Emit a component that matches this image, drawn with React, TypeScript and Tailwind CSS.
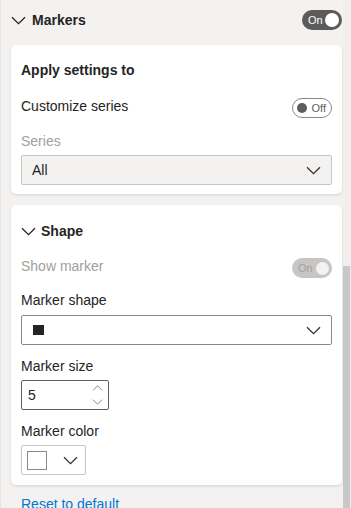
import { ReactNode } from "react";

// chevron used by section headers and dropdowns
function Chevron({ className = "" }: { className?: string }) {
  return (
    <svg width="15" height="9" viewBox="0 0 15 9" className={className} fill="none">
      <path d="M1 1.2 L7.5 7.6 L14 1.2" stroke="currentColor" strokeWidth="1.3" />
    </svg>
  );
}

function SmallChevron({ up }: { up?: boolean }) {
  return (
    <svg width="11" height="6" viewBox="0 0 11 6" fill="none">
      <path d={up ? "M1 5.3 L5.5 0.8 L10 5.3" : "M1 0.7 L5.5 5.2 L10 0.7"} stroke="#8a8886" strokeWidth="1" />
    </svg>
  );
}

function Toggle({ on, disabled }: { on: boolean; disabled?: boolean }) {
  if (disabled) {
    return (
      <div className="w-[40px] h-[20px] rounded-full bg-[#c8c6c4] flex items-center justify-between pl-[6px] pr-[3px]">
        <span className="text-[11px] text-[#a19f9d] leading-none">On</span>
        <span className="w-[13px] h-[13px] rounded-full bg-[#f3f2f1]" />
      </div>
    );
  }
  if (on) {
    return (
      <div className="w-[40px] h-[20px] rounded-full bg-[#5c5b5a] flex items-center justify-between pl-[6px] pr-[3px]">
        <span className="text-[11px] text-white leading-none">On</span>
        <span className="w-[14px] h-[14px] rounded-full bg-white" />
      </div>
    );
  }
  return (
    <div className="w-[40px] h-[20px] rounded-full border border-[#8a8886] bg-white flex items-center pl-[4px] pr-[5px] justify-between">
      <span className="w-[10px] h-[10px] rounded-full bg-[#605e5c]" />
      <span className="text-[11px] text-[#605e5c] leading-none">Off</span>
    </div>
  );
}

function Card({ children, className = "" }: { children: ReactNode; className?: string }) {
  return (
    <div className={"bg-white rounded-[5px] shadow-[0_1px_3px_rgba(0,0,0,0.13)] px-[10px] " + className}>
      {children}
    </div>
  );
}

export default function App() {
  return (
    <div
      className="w-[351px] h-[508px] overflow-hidden flex bg-[#f3f2f1] text-[#252423] text-[14px]"
      style={{ fontFamily: '"Liberation Sans", Arial, sans-serif' }}
    >
      <div className="w-[343px] border-l border-[#e6e4e2] pl-[10px] pr-[1px] pt-[10px] flex flex-col">
        {/* Markers header */}
        <div className="h-5 flex items-center justify-between">
          <div className="flex items-center gap-[6px]">
            <Chevron className="text-[#252423]" />
            <span className="text-[14px] font-semibold">Markers</span>
          </div>
          <Toggle on />
        </div>

        <Card className="mt-[15px] pt-[15px] pb-[9px]">
          <div className="h-5 flex items-center font-semibold">Apply settings to</div>
          <div className="h-5 mt-4 flex items-center justify-between">
            <span>Customize series</span>
            <div className="mt-[4px]">
              <Toggle on={false} />
            </div>
          </div>
          <div className="h-5 mt-[15px] flex items-center text-[#a19f9d]">Series</div>
          <div className="mt-[4px] h-[30px] rounded-[2px] border border-[#c8c6c4] bg-[#f3f2f1] flex items-center justify-between pl-[10px] pr-[10px]">
            <span>All</span>
            <Chevron className="text-[#323130]" />
          </div>
        </Card>

        <Card className="mt-[11px] pt-4 pb-[10px]">
          <div className="h-5 flex items-center gap-[5px]">
            <Chevron className="text-[#252423]" />
            <span className="text-[14px] font-semibold">Shape</span>
          </div>
          <div className="h-5 mt-[15px] flex items-center justify-between">
            <span className="text-[#a19f9d]">Show marker</span>
            <div className="mt-[4px]">
              <Toggle on disabled />
            </div>
          </div>
          <div className="h-5 mt-[14px] flex items-center">Marker shape</div>
          <div className="mt-[5px] h-[30px] rounded-[2px] border border-[#8a8886] bg-white flex items-center justify-between pl-[11px] pr-[10px]">
            <span className="w-[11px] h-[10px] bg-[#252423]" />
            <Chevron className="text-[#323130]" />
          </div>
          <div className="h-5 mt-[11px] flex items-center">Marker size</div>
          <div className="mt-[4px] w-[88px] h-[30px] rounded-[2px] border border-[#605e5c] bg-white flex items-center justify-between pl-[6px] pr-[5px]">
            <span>5</span>
            <div className="flex flex-col gap-[8px]">
              <SmallChevron up />
              <SmallChevron />
            </div>
          </div>
          <div className="h-5 mt-[11px] flex items-center">Marker color</div>
          <div className="mt-[4px] w-[65px] h-[30px] rounded-[2px] border border-[#c8c6c4] bg-white flex items-center pl-[5px] pr-[7px] justify-between">
            <span className="w-[20px] h-[19px] border border-[#8a8886] bg-white" />
            <Chevron className="text-[#323130]" />
          </div>
        </Card>

        <div className="h-5 mt-[9px] pl-[10px] flex items-center text-[#0078d4]">Reset to default</div>
      </div>

      {/* scrollbar */}
      <div className="w-[8px] h-full bg-[#f0efee] flex flex-col">
        <div className="h-[266px]" />
        <div className="flex-1 bg-[#c8c8c8] mr-[1px]" />
      </div>
    </div>
  );
}
